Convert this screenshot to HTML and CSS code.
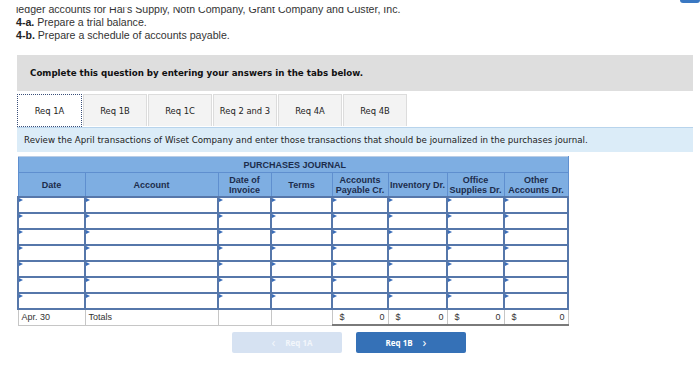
FILE: index.html
```html
<!DOCTYPE html>
<html lang="en">
<head>
    <meta charset="UTF-8">
    <title>Purchases Journal</title>
    <link rel="stylesheet" href="styles.css">
</head>
<body>
    <div class="top-tab"></div>

    <div class="intro">
        <div class="cut">ledger accounts for Hal's Supply, Noth Company, Grant Company and Custer, Inc.</div>
        <div><b>4-a.</b> Prepare a trial balance.</div>
        <div><b>4-b.</b> Prepare a schedule of accounts payable.</div>
    </div>

    <div class="question">Complete this question by entering your answers in the tabs below.</div>

    <div class="tabs">
        <div class="tab active">Req 1A</div>
        <div class="tab">Req 1B</div>
        <div class="tab">Req 1C</div>
        <div class="tab">Req 2 and 3</div>
        <div class="tab">Req 4A</div>
        <div class="tab">Req 4B</div>
    </div>

    <div class="instructions">Review the April transactions of Wiset Company and enter those transactions that should be journalized in the purchases journal.</div>

    <table class="journal">
        <colgroup>
            <col style="width: 67px">
            <col style="width: 133px">
            <col style="width: 53px">
            <col style="width: 61px">
            <col style="width: 56px">
            <col style="width: 59px">
            <col style="width: 57px">
            <col style="width: 64px">
        </colgroup>
        <thead>
            <tr class="title">
                <th colspan="8"><span>PURCHASES JOURNAL</span></th>
            </tr>
            <tr class="heads">
                <th>Date</th>
                <th>Account</th>
                <th>Date of<br>Invoice</th>
                <th>Terms</th>
                <th>Accounts<br>Payable Cr.</th>
                <th>Inventory Dr.</th>
                <th>Office<br>Supplies Dr.</th>
                <th>Other<br>Accounts Dr.</th>
            </tr>
        </thead>
        <tbody id="rows"></tbody>
        <tfoot>
            <tr class="totals">
                <td>Apr. 30</td>
                <td>Totals</td>
                <td></td>
                <td></td>
                <td class="amt"><span>$</span><span>0</span></td>
                <td class="amt"><span>$</span><span>0</span></td>
                <td class="amt"><span>$</span><span>0</span></td>
                <td class="amt"><span>$</span><span>0</span></td>
            </tr>
        </tfoot>
    </table>

    <div class="nav">
        <button class="nav-btn prev"><span class="chev">&lsaquo;</span>Req 1A</button>
        <button class="nav-btn next">Req 1B<span class="chev">&rsaquo;</span></button>
    </div>

    <script>
        // Empty entry rows of the journal
        const rows = document.getElementById('rows');
        for (let i = 0; i < 7; i++) {
            const tr = document.createElement('tr');
            for (let j = 0; j < 8; j++) {
                const td = document.createElement('td');
                td.className = 'entry';
                tr.appendChild(td);
            }
            rows.appendChild(tr);
        }
    </script>
</body>
</html>
```

FILE: styles.css
```css
/* Page */
body {
    margin: 0;
    font-family: 'Liberation Sans', Arial, sans-serif;
    color: #333;
    background: #fff;
    position: relative;
    width: 700px;
    height: 380px;
    overflow: hidden;
}

.top-tab {
    position: absolute;
    top: -4px;
    right: 0;
    width: 20px;
    height: 7px;
    background-color: #3a78c2;
    border-radius: 3px;
}

/* Problem text */
.intro {
    padding: 3px 16px 0;
    font-size: 10.6px;
    line-height: 13px;
    color: #333;
}

.intro b {
    color: #222;
}

.cut {
    clip-path: inset(4px 0 0 0);
}

/* Question banner */
.question {
    margin: 13px 7px 0 17px;
    height: 36px;
    padding-left: 13px;
    background-color: #dedede;
    font-family: 'DejaVu Sans', Verdana, sans-serif;
    font-size: 8.7px;
    font-weight: bold;
    color: #111;
    display: flex;
    align-items: center;
}

/* Tabs */
.tabs {
    display: flex;
    margin: 3px 0 0 17px;
    gap: 1px;
}

.tab {
    width: 62px;
    height: 31px;
    display: flex;
    align-items: center;
    justify-content: center;
    background-color: #f3f3f3;
    border: 1px solid #dcdcdc;
    border-bottom: none;
    font-family: 'DejaVu Sans', Verdana, sans-serif;
    font-size: 8.4px;
    color: #222;
}

.tab.active {
    background-color: #fff;
    border: 1px dotted #3a4f7a;
    width: 63px;
    height: 31px;
}

.instructions {
    margin: 0 7px 0 17px;
    height: 24px;
    padding-left: 7px;
    display: flex;
    align-items: center;
    background-color: #dbecf8;
    border-top: 1px solid #b8d4ec;
    font-family: 'DejaVu Sans', Verdana, sans-serif;
    font-size: 8.7px;
    color: #222;
}

/* Journal table */
.journal {
    margin: 4px 0 0 17px;
    width: 550px;
    border-collapse: collapse;
    table-layout: fixed;
    font-size: 9px;
}

.journal th {
    background-color: #7eaee2;
    color: #1c2c4c;
    font-weight: bold;
    border: 1px solid #5f8fcf;
    padding: 0;
    line-height: 10px;
}

.title th {
    height: 15px;
    text-align: left;
    border-top-color: #b9cde6;
}

.title span {
    display: inline-block;
    margin-left: 225px;
}

.heads th {
    height: 23px;
}

.entry {
    height: 14px;
    border: 2px solid #5677aa;
    background-color: #fff;
    position: relative;
    padding: 0;
}

.entry::before {
    content: '';
    position: absolute;
    top: 0;
    left: 0;
    border-left: 4px solid #3a6db8;
    border-top: 2px solid transparent;
    border-bottom: 2px solid transparent;
}

.totals td {
    height: 14px;
    padding: 0 3px;
    border: 1px solid #c6c6c6;
    color: #333;
    font-size: 9px;
}

.totals td.amt {
    border-bottom: 2px solid #7a7a7a;
}

.amt span:first-child {
    float: left;
    padding-left: 4px;
}

.amt span:last-child {
    float: right;
}

/* Prev / next */
.nav {
    display: flex;
    gap: 14px;
    margin: 6px 0 0 232px;
}

.nav-btn {
    width: 110px;
    height: 21px;
    border: none;
    border-radius: 2px;
    color: #fff;
    font-family: 'Open Sans', sans-serif;
    font-size: 8px;
    font-weight: bold;
    padding: 0;
    display: flex;
    align-items: center;
    justify-content: center;
}

.chev {
    font-size: 13px;
    font-weight: normal;
    margin: -2px 10px 0;
}

.nav-btn.prev {
    background-color: #d6e2f2;
    color: #f2f6fb;
}

.nav-btn.next {
    background-color: #3571b7;
}
```
